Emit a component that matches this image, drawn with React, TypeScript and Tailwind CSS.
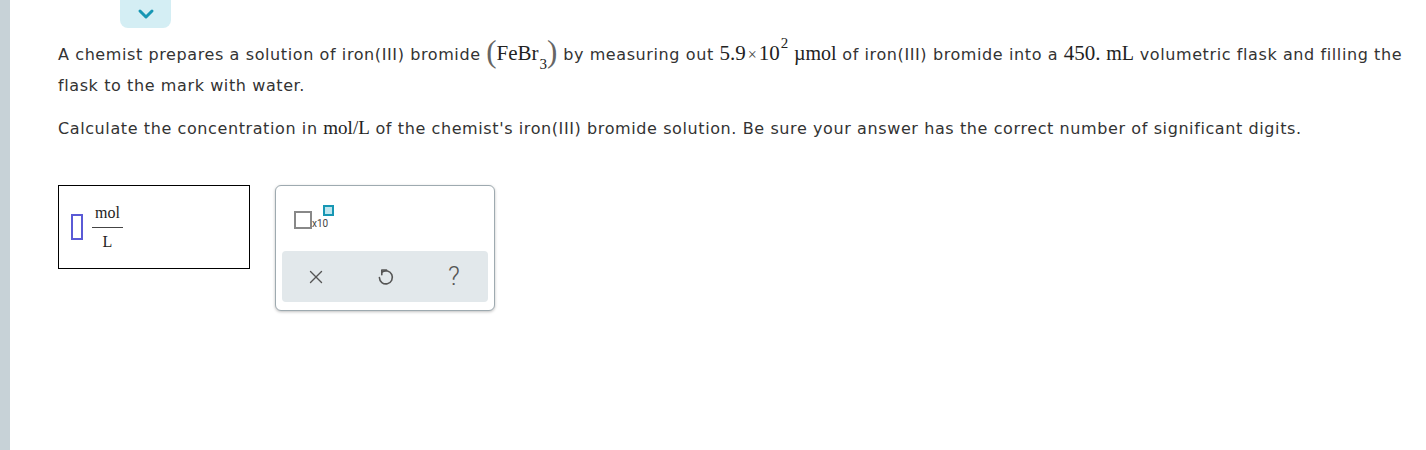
import { X } from 'lucide-react';

const sans = { fontFamily: 'Verdana, "DejaVu Sans", sans-serif' };
const serif = { fontFamily: '"Liberation Serif", "Times New Roman", serif' };

function Chevron() {
  return (
    <div className="ml-[110px] flex h-[28px] w-[51px] items-center justify-center rounded-b-lg bg-[#d4eef4]">
      <svg width="18" height="12" viewBox="0 0 18 12" fill="none">
        <path d="M3 3l6 6 6-6" stroke="#1797b4" strokeWidth="3" strokeLinecap="round" strokeLinejoin="round" />
      </svg>
    </div>
  );
}

function M({ size, children }: { size: string; children: React.ReactNode }) {
  return (
    <span className={`${size} leading-[0] tracking-normal text-[#222]`} style={serif}>
      {children}
    </span>
  );
}

function Paren({ c }: { c: string }) {
  return <span className="relative top-[2px] text-[31px] leading-[0] text-[#666]">{c}</span>;
}

function UndoIcon() {
  return (
    <svg width="17" height="20" viewBox="0 0 17 20" fill="none" stroke="#555" strokeWidth="1.6" strokeLinecap="round" strokeLinejoin="round">
      <path d="M5 5.2 A6.5 6.5 0 1 1 2.4 10.5" />
      <path d="M9.5 3 H4.8 V7.8" />
    </svg>
  );
}

export default function App() {
  return (
    <div className="flex h-[450px] w-[1426px] bg-white text-[#333]" style={sans}>
      <div className="h-full w-[10px] shrink-0 bg-[#c7d2d7]" />
      <div className="flex-1">
        <Chevron />
        <div className="pl-[48px] pr-2 pt-[11px] text-[16px] tracking-[0.6px]">
          <p className="leading-[31px]">
            A chemist prepares a solution of iron(III) bromide{' '}
            <M size="text-[21px]">
              <Paren c="(" />
              FeBr<span className="relative top-[9px] ml-[1px] text-[15px] leading-[0]">3</span>
              <Paren c=")" />
            </M>{' '}
            by measuring out{' '}
            <M size="text-[21px]">
              5.9<span className="mx-[2px] text-[16px] text-[#444]">×</span>10<span className="relative -top-[12px] ml-[1px] text-[15px] leading-[0]">2</span>
            </M>{' '}
            <M size="text-[20px]">µmol</M> of iron(III) bromide into a <M size="text-[21px]">450.</M>{' '}
            <M size="text-[20px]">mL</M> volumetric flask and filling the flask to the mark with water.
          </p>
          <p className="mt-[12px] leading-[31px]">
            Calculate the concentration in <M size="text-[19px]">mol/L</M> of the chemist's iron(III) bromide solution. Be
            sure your answer has the correct number of significant digits.
          </p>

          <div className="mt-[41px] flex items-start gap-[25px] tracking-normal">
            <div className="flex h-[84px] w-[192px] items-center border border-black pl-[12px]">
              <div className="h-[26px] w-[12px] border-2 border-[#5a5ad6]" />
              <div className="ml-[9px] flex flex-col items-center text-[16px] text-[#222]" style={serif}>
                <span className="mb-[4px] leading-[20px]">mol</span>
                <span className="h-px w-[31px] bg-[#444]" />
                <span className="mt-[4px] leading-[20px]">L</span>
              </div>
            </div>

            <div className="flex h-[126px] w-[220px] flex-col rounded-[6px] border border-[#9eaab0] bg-white p-[6px] shadow-[0_1px_3px_rgba(0,0,0,0.25)]">
              <div className="flex h-[59px] items-start pl-[12px] pt-[13px]">
                <div className="relative flex items-end">
                  <div className="mt-[6px] h-[18px] w-[18px] border-2 border-[#888]" />
                  <span className="text-[10px] leading-none text-[#444]" style={{ fontFamily: 'Roboto, sans-serif' }}>x10</span>
                  <div className="absolute left-[29px] top-0 h-[11px] w-[11px] border-2 border-[#1797b4] bg-[#bfe5ee]" />
                </div>
              </div>
              <div className="flex h-[51px] items-center justify-between rounded-[4px] bg-[#e2e8eb] px-[23px]">
                <X size={22} strokeWidth={1.5} color="#555" />
                <UndoIcon />
                <span className="w-[22px] text-center text-[26px] font-light text-[#555]" style={{ fontFamily: 'Roboto, sans-serif' }}>?</span>
              </div>
            </div>
          </div>
        </div>
      </div>
    </div>
  );
}
